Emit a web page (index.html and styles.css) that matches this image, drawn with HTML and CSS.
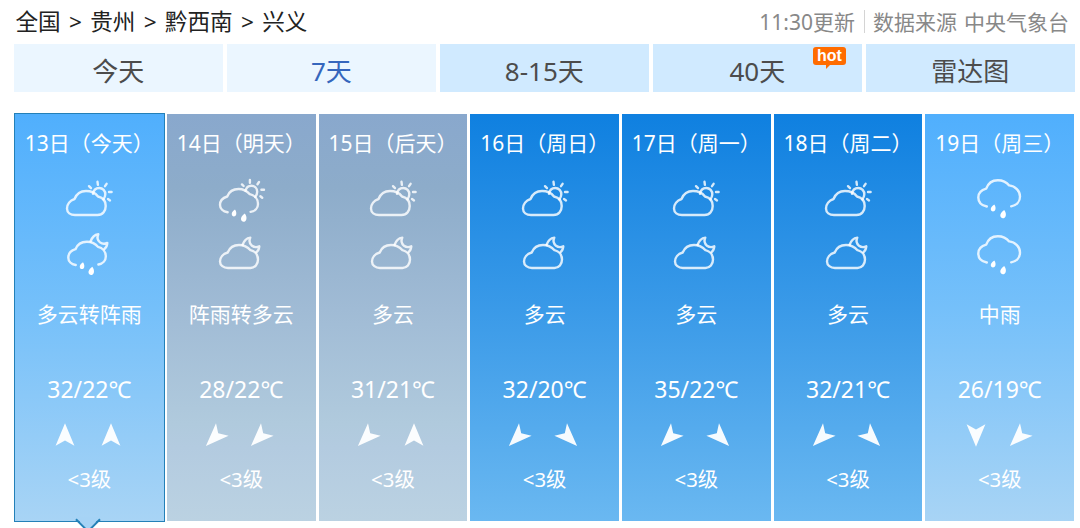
FILE: index.html
```html
<!DOCTYPE html>
<html lang="zh-CN">
  <head>
    <meta charset="UTF-8" />
    <meta name="viewport" content="width=device-width, initial-scale=1.0" />
    <title>兴义天气预报</title>
    <link rel="stylesheet" href="styles.css">
  </head>
  <body>
    <svg class="sprite" aria-hidden="true">
      <symbol id="cloud-sun" viewBox="0 0 60 48">
        <path d="M16 39H38.5C44 39 46.7 34.5 46.7 30C46.7 25 43.5 21.5 39 20.5C36 16.5 31.5 15 27 15C21 15 17.5 18 15.5 23C11 24.5 8 28.5 8 32.5C8 36.5 11.5 39 16 39Z" />
        <path d="M34 17.8C34.6 14 37 12 40.2 12C43.8 12 46.5 15 46.3 18.5C46.2 20.6 45.2 22.3 44.3 23.5" />
        <path d="M30 10.2L32 12.2M38.5 5.8L38.9 8.8M47.6 7.8L46 10.2M50 16H52.6M49 23L51 24.4" />
      </symbol>
      <symbol id="rain-sun" viewBox="0 0 60 48">
        <path d="M16.6 36.3C12 35.5 9 32.5 9 29C9 25 12 21.8 16.2 20.5C18 15.8 22 13 27.6 13C32 13 36 15 38.8 18.2C43.5 19.2 47 23 47 28C47 32 44 35.2 39.6 35.9" />
        <path d="M34.5 14.9C35.2 11.8 37.5 9.8 40.3 9.8C43.8 9.8 46.2 12.5 46.2 15.8C46.2 17.8 45.4 19.6 44.2 21" />
        <path d="M31 8.4L32.6 10M38.9 4V6.8M48 6L46.5 8.2M50.4 13.7H53M49.4 20.3L51.2 21.7" />
        <path class="drop" d="M24 33.5C21.5 35 20.5 37 20.8 38.5C21.2 41 24.6 41 25.2 38.5C25.5 37 25.2 35 24 33.5ZM33.8 37.5C31 39.3 29.8 41.5 30 43.3C30.3 46.4 34.4 46.7 35.3 43.5C35.8 41.5 35.3 39.3 33.8 37.5Z" />
      </symbol>
      <symbol id="cloud-moon" viewBox="0 0 60 48">
        <path d="M17 36H39.5C44 36 47 32 47 27.5C47 23 44 19.3 39.5 18.2C36.5 14.7 32.5 13 28 13C22.5 13 18.5 16 16.7 20.5C12 21.8 9 25.5 9 29.5C9 33.3 12.5 36 17 36Z" />
        <path d="M31.5 13C33 8.5 35.5 6 39.3 5.6C37.8 9 38.6 11.8 41 13.7C43 15.2 45.8 15.5 48.3 14.2C48.2 16.8 47.2 18.8 45.4 20.3" />
      </symbol>
      <symbol id="rain-moon" viewBox="0 0 60 48">
        <path d="M16.7 33C12.2 32.2 9.3 29.2 9.3 25.7C9.3 21.7 12 18.5 16.5 17.2C18.3 12.5 22.2 9.7 27.8 9.7C32.2 9.7 36.5 11.5 39 14.9C43.5 15.9 46.8 19.7 46.8 24.5C46.8 28.5 43.8 31.8 39.4 32.5" />
        <path d="M31.5 9.7C33 5.2 35.5 2.7 39.3 2.3C37.8 5.7 38.6 8.5 41 10.4C43 11.9 45.8 12.2 48.3 10.9C48.2 13.5 47.2 15.5 45.4 17" />
        <path class="drop" d="M24 30.2C21.5 31.7 20.5 33.7 20.8 35.2C21.2 37.7 24.6 37.7 25.2 35.2C25.5 33.7 25.2 31.7 24 30.2ZM33.3 34.8C30.5 36.6 29.3 38.8 29.5 40.6C29.8 43.7 33.9 44 34.8 40.8C35.3 38.8 34.8 36.6 33.3 34.8Z" />
      </symbol>
      <symbol id="rain" viewBox="0 0 60 48">
        <path d="M16.8 30.5C11.5 29.5 8.3 26 8.3 21.5C8.3 17.3 11.5 14 16.2 12.7C18 7.5 22.5 4.2 27.8 4.2C32.5 4.2 36.5 6 39.2 9.4C45.2 10 50 15 50 20.5C50 25.5 46.5 29.5 41.2 30.4" />
        <path class="drop" d="M24.3 28.5C21.8 30 20.6 32 20.8 33.6C21.2 36.2 24.7 36.2 25.4 33.6C25.8 32 25.5 30 24.3 28.5ZM34.2 34C31.4 35.8 30.1 38 30.3 39.8C30.6 42.9 34.8 43.2 35.7 40C36.2 38 35.7 35.8 34.2 34Z" />
      </symbol>
      <symbol id="wind-n" viewBox="0 0 24 24">
        <path d="M12 .2L21.4 22.8L12 17.6L2.6 22.8Z" />
      </symbol>
      <symbol id="wind-s" viewBox="0 0 24 24">
        <path d="M12 23.8L21.4 1.2L12 6.4L2.6 1.2Z" />
      </symbol>
      <symbol id="wind-sw" viewBox="0 0 24 24">
        <path d="M.9 22.9L11 .2L13.2 10.3L23.6 12.7Z" />
      </symbol>
      <symbol id="wind-se" viewBox="0 0 24 24">
        <path d="M23.1 22.9L13 .2L10.8 10.3L.4 12.7Z" />
      </symbol>
    </svg>

    <header class="top">
      <div class="crumbs">
        <span>全国</span><i>&gt;</i><span>贵州</span><i>&gt;</i><span>黔西南</span><i>&gt;</i><span>兴义</span>
      </div>
      <div class="source">
        <span>11:30更新</span><b class="sep"></b><span>数据来源 中央气象台</span>
      </div>
    </header>

    <nav class="tabs">
      <a class="tab near">今天</a>
      <a class="tab near active">7天</a>
      <a class="tab">8-15天</a>
      <a class="tab">40天<span class="hot">hot</span></a>
      <a class="tab">雷达图</a>
    </nav>

    <main class="days">
      <section class="day light today">
        <h2>13日（今天）</h2>
        <svg class="icon"><use href="#cloud-sun" /></svg>
        <svg class="icon"><use href="#rain-moon" /></svg>
        <p class="wea">多云转阵雨</p>
        <p class="tem">32/22℃</p>
        <div class="wind">
          <svg><use href="#wind-n" /></svg>
          <svg><use href="#wind-n" /></svg>
        </div>
        <p class="level">&lt;3级</p>
      </section>
      <section class="day grey">
        <h2>14日（明天）</h2>
        <svg class="icon"><use href="#rain-sun" /></svg>
        <svg class="icon"><use href="#cloud-moon" /></svg>
        <p class="wea">阵雨转多云</p>
        <p class="tem">28/22℃</p>
        <div class="wind">
          <svg><use href="#wind-sw" /></svg>
          <svg><use href="#wind-sw" /></svg>
        </div>
        <p class="level">&lt;3级</p>
      </section>
      <section class="day grey">
        <h2>15日（后天）</h2>
        <svg class="icon"><use href="#cloud-sun" /></svg>
        <svg class="icon"><use href="#cloud-moon" /></svg>
        <p class="wea">多云</p>
        <p class="tem">31/21℃</p>
        <div class="wind">
          <svg><use href="#wind-sw" /></svg>
          <svg><use href="#wind-n" /></svg>
        </div>
        <p class="level">&lt;3级</p>
      </section>
      <section class="day deep">
        <h2>16日（周日）</h2>
        <svg class="icon"><use href="#cloud-sun" /></svg>
        <svg class="icon"><use href="#cloud-moon" /></svg>
        <p class="wea">多云</p>
        <p class="tem">32/20℃</p>
        <div class="wind">
          <svg><use href="#wind-sw" /></svg>
          <svg><use href="#wind-se" /></svg>
        </div>
        <p class="level">&lt;3级</p>
      </section>
      <section class="day deep">
        <h2>17日（周一）</h2>
        <svg class="icon"><use href="#cloud-sun" /></svg>
        <svg class="icon"><use href="#cloud-moon" /></svg>
        <p class="wea">多云</p>
        <p class="tem">35/22℃</p>
        <div class="wind">
          <svg><use href="#wind-sw" /></svg>
          <svg><use href="#wind-se" /></svg>
        </div>
        <p class="level">&lt;3级</p>
      </section>
      <section class="day deep">
        <h2>18日（周二）</h2>
        <svg class="icon"><use href="#cloud-sun" /></svg>
        <svg class="icon"><use href="#cloud-moon" /></svg>
        <p class="wea">多云</p>
        <p class="tem">32/21℃</p>
        <div class="wind">
          <svg><use href="#wind-sw" /></svg>
          <svg><use href="#wind-se" /></svg>
        </div>
        <p class="level">&lt;3级</p>
      </section>
      <section class="day light">
        <h2>19日（周三）</h2>
        <svg class="icon"><use href="#rain" /></svg>
        <svg class="icon"><use href="#rain" /></svg>
        <p class="wea">中雨</p>
        <p class="tem">26/19℃</p>
        <div class="wind">
          <svg><use href="#wind-s" /></svg>
          <svg><use href="#wind-sw" /></svg>
        </div>
        <p class="level">&lt;3级</p>
      </section>
    </main>
  </body>
</html>
```

FILE: styles.css
```css
* {
  box-sizing: border-box;
}
body {
  margin: 0;
  height: 528px;
  overflow: hidden;
  background: #fff;
  font-family: "Noto Sans", "Noto Sans CJK SC", sans-serif;
}
.sprite {
  display: none;
}
.top {
  display: flex;
  justify-content: space-between;
  height: 43.5px;
  padding: 0 11px 0 15.5px;
  line-height: 44px;
}
.crumbs {
  display: flex;
  font-size: 22.6px;
  color: #222;
}
.crumbs i {
  width: 29.5px;
  font-style: normal;
  text-align: center;
}
.source {
  display: flex;
  align-items: center;
  font-size: 21px;
  word-spacing: 1.5px;
  color: #888;
}
.sep {
  width: 1px;
  height: 23px;
  margin: 0 8px 0 9px;
  background: #d4d4d4;
}
.tabs {
  display: grid;
  grid-template-columns: repeat(5, 1fr);
  column-gap: 3.7px;
  margin: 0 5px 0 13.7px;
}
.tab {
  position: relative;
  height: 48.5px;
  line-height: 54px;
  font-size: 26px;
  text-align: center;
  color: #4c4c4c;
  background: #d0eaff;
}
.near {
  background: #ebf6ff;
}
.active {
  color: #3566bd;
}
.hot {
  position: absolute;
  top: 3px;
  right: 16px;
  width: 33px;
  height: 18px;
  border-radius: 3px;
  background: #ff6c00;
  color: #fff;
  font: bold 16px/18px "Liberation Sans", sans-serif;
}
.hot::after {
  content: "";
  position: absolute;
  top: 17px;
  left: 13px;
  border-top: 5px solid #ff6c00;
  border-right: 5px solid transparent;
}
.days {
  display: grid;
  grid-template-columns: repeat(7, 1fr);
  column-gap: 3.2px;
  margin: 22px 6px 0 15.3px;
}
.day {
  display: flex;
  flex-direction: column;
  align-items: center;
  height: 407px;
  padding-top: 14px;
  color: #fff;
}
.light {
  background: linear-gradient(#50affd, #75c0fa 48%, #a8d4f5);
}
.grey {
  background: linear-gradient(#89a8cd, #8dacca 18%, #a0bbd5 48%, #b0cadd 76%, #b3cbe0 82%, #bbd2e2);
}
.deep {
  background: linear-gradient(#0f80e0, #3a9ae8 48%, #6ab8f1);
}
.today {
  position: relative;
  height: 409px;
  margin: -1px -1.2px 0 -1.6px;
  border: 1.5px solid #2380b8;
}
.today::after {
  content: "";
  position: absolute;
  left: 64px;
  bottom: -8px;
  width: 16px;
  height: 16px;
  border: solid #2380b8;
  border-width: 0 2px 2px 0;
  background: linear-gradient(135deg, transparent 42%, #a6d3f5 42%);
  transform: rotate(45deg);
}
.day h2,
.day p {
  margin: 0;
  line-height: 30px;
  font-weight: normal;
  white-space: nowrap;
}
.day h2 {
  margin-bottom: 18px;
  font-size: 21px;
}
.icon {
  width: 60px;
  height: 48px;
  margin-bottom: 8px;
  fill: none;
  stroke: #fff;
  stroke-opacity: .82;
  stroke-width: 2.4;
  stroke-linecap: round;
  stroke-linejoin: round;
}
.drop {
  fill: #fff;
  stroke: none;
}
.day .wea {
  margin-top: 11px;
  font-size: 21px;
}
.day .tem {
  margin-top: 45px;
  font-size: 23px;
}
.wind {
  display: flex;
  gap: 21.4px;
  margin: 19px 3px 17px 0;
}
.wind svg {
  width: 24px;
  height: 24px;
  overflow: visible;
  fill: #fff;
  fill-opacity: .95;
}
.day .level {
  font-size: 20.4px;
}
```
